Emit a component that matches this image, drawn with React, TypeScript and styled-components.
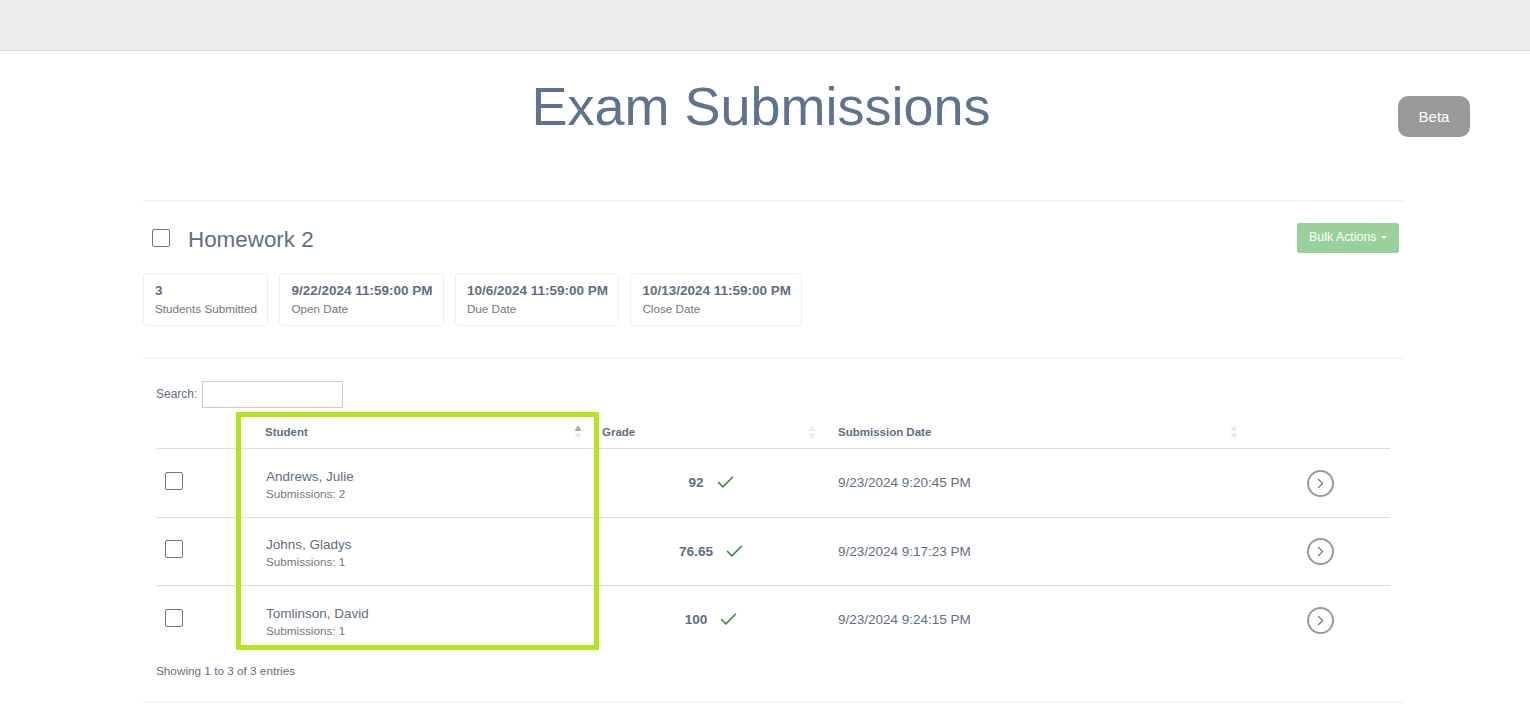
import { ChevronRight, Check } from "lucide-react";
import styled, { createGlobalStyle } from "styled-components";

const stats = [
  { value: "3", label: "Students Submitted" },
  { value: "9/22/2024 11:59:00 PM", label: "Open Date" },
  { value: "10/6/2024 11:59:00 PM", label: "Due Date" },
  { value: "10/13/2024 11:59:00 PM", label: "Close Date" },
];

const students = [
  { name: "Andrews, Julie", count: 2, grade: "92", date: "9/23/2024 9:20:45 PM" },
  { name: "Johns, Gladys", count: 1, grade: "76.65", date: "9/23/2024 9:17:23 PM" },
  { name: "Tomlinson, David", count: 1, grade: "100", date: "9/23/2024 9:24:15 PM" },
];

function SortIcon({ active }: { active?: boolean }) {
  return (
    <SortSvg width="8" height="16" viewBox="0 0 8 16">
      <path d="M4 1 L7.5 7 H0.5 Z" fill={active ? "#a3adb9" : "#e6e9ed"} />
      <path d="M4 15 L7.5 9.500 H0.5 Z" fill="#e6e9ed" />
    </SortSvg>
  );
}

export default function App() {
  return (
    <>
      <GlobalStyle />
      <TopBar />
      <Title>Exam Submissions</Title>
      <BetaButton>Beta</BetaButton>
      <Container>
        <Divider />
        <AssignmentHeader>
          <AssignmentName>
            <Box />
            <h2>Homework 2</h2>
          </AssignmentName>
          <BulkButton>
            Bulk Actions <Caret />
          </BulkButton>
        </AssignmentHeader>
        <Stats>
          {stats.map((s) => (
            <StatCard key={s.label}>
              <strong>{s.value}</strong>
              <span>{s.label}</span>
            </StatCard>
          ))}
        </Stats>
        <Divider />
        <TableArea>
          <SearchRow>
            <span>Search:</span>
            <SearchInput />
          </SearchRow>
          <TableWrap>
            <HeadRow>
              <span />
              <HeadCell $first>
                Student <SortIcon active />
              </HeadCell>
              <HeadCell>
                Grade <SortIcon />
              </HeadCell>
              <HeadCell $wide>
                Submission Date <SortIcon />
              </HeadCell>
              <span />
            </HeadRow>
            {students.map((s) => (
              <Row key={s.name}>
                <Box />
                <StudentCell>
                  <Name>{s.name}</Name>
                  <Count>Submissions: {s.count}</Count>
                </StudentCell>
                <GradeCell>
                  <strong>{s.grade}</strong>
                  <Check size={21} color="#3f8a4a" strokeWidth={1.9} />
                </GradeCell>
                <DateCell>{s.date}</DateCell>
                <ArrowCell>
                  <Arrow>
                    <ChevronRight size={17} strokeWidth={1.5} />
                  </Arrow>
                </ArrowCell>
              </Row>
            ))}
            <Highlight />
          </TableWrap>
          <Entries>Showing 1 to 3 of 3 entries</Entries>
        </TableArea>
        <Divider />
      </Container>
    </>
  );
}

const GlobalStyle = createGlobalStyle`
  html, body {
    margin: 0;
    padding: 0;
    background: #fff;
    overflow: hidden;
    font-family: "Liberation Sans", Arial, sans-serif;
    color: #5f6f82;
  }
  * { box-sizing: border-box; }
`;

const TopBar = styled.div`
  height: 51px;
  background: #ececec;
  border-bottom: 1px solid #dcdcdc;
`;

const Title = styled.h1`
  margin: 0;
  height: 149px;
  padding-top: 21px;
  padding-right: 8px;
  text-align: center;
  font-size: 54px;
  line-height: 68px;
  font-weight: 400;
  color: #5f7390;
`;

const BetaButton = styled.button`
  position: absolute;
  top: 96px;
  left: 1398px;
  width: 72px;
  height: 41px;
  border: none;
  border-radius: 10px;
  background: #999;
  color: #fff;
  font: 400 15px "Liberation Sans", Arial, sans-serif;
`;

const Container = styled.main`
  width: 1260px;
  margin-left: 143px;
`;

const Divider = styled.hr`
  margin: 0;
  height: 1px;
  border: none;
  background: #eee;
`;

const AssignmentHeader = styled.div`
  display: flex;
  justify-content: space-between;
  align-items: flex-start;
  padding: 22px 4px 0 9px;
  height: 72px;
`;

const AssignmentName = styled.div`
  display: flex;
  align-items: center;
  gap: 18px;
  height: 30px;

  h2 {
    margin: 4px 0 0;
    font-size: 22.4px;
    font-weight: 400;
    color: #5f6f82;
  }
`;

const Box = styled.span`
  display: block;
  width: 18px;
  height: 18px;
  border: 1px solid #767676;
  border-radius: 2px;
  background: #fff;
`;

const BulkButton = styled.button`
  width: 102px;
  height: 30px;
  padding: 0 0 2px;
  border: 1px solid #98d098;
  border-radius: 2px;
  background: #9ad09a;
  color: #fff;
  font: 400 12.4px "Liberation Sans", Arial, sans-serif;
`;

const Caret = styled.span`
  display: inline-block;
  margin-left: 1px;
  vertical-align: middle;
  border-top: 3px solid #fff;
  border-left: 3px solid transparent;
  border-right: 3px solid transparent;
`;

const Stats = styled.div`
  display: flex;
  gap: 11px;
  height: 85px;
`;

const StatCard = styled.div`
  display: flex;
  flex-direction: column;
  gap: 2px;
  height: 53px;
  padding: 9px 10.4px 0 11px;
  border: 1px solid #eee;
  border-radius: 4px;

  strong {
    font-size: 13.5px;
    line-height: 16px;
    color: #5f6f82;
  }

  span {
    font-size: 11.7px;
    line-height: 15px;
    color: #777;
  }
`;

const TableArea = styled.section`
  padding: 22px 13px 0;
  height: 343px;
`;

const SearchRow = styled.label`
  display: flex;
  align-items: center;
  gap: 5px;
  height: 27px;
  font-size: 12px;

  span {
    margin-bottom: 2px;
  }
`;

const SearchInput = styled.input`
  width: 141px;
  height: 27px;
  border: 1px solid #ccc;
  background: #fff;
  outline: none;
`;

const TableWrap = styled.div`
  position: relative;
  margin-top: 8px;
`;

const columns = "96px 338px 235px 425px 140px";

const HeadRow = styled.div`
  display: grid;
  grid-template-columns: ${columns};
  height: 33px;
  border-bottom: 1px solid #ddd;
`;

const HeadCell = styled.div<{ $first?: boolean; $wide?: boolean }>`
  display: flex;
  justify-content: space-between;
  align-items: center;
  padding: 0 ${(p) => (p.$wide ? "12px" : p.$first ? "8px" : "9px")} 0 ${(p) => (p.$first ? "13px" : p.$wide ? "13px" : "12px")};
  font-size: 11.5px;
  font-weight: 700;
  color: #5f6f82;
`;

const SortSvg = styled.svg`
  display: block;
`;

const Row = styled.div`
  display: grid;
  grid-template-columns: ${columns};
  align-items: center;
  height: 68px;
  border-bottom: 1px solid #ddd;

  ${HeadRow} + & {
    height: 69px;
  }

  &:nth-last-of-type(2) {
    border-bottom: none;
  }

  & > ${Box} {
    margin: 0 0 5px 9px;
  }
`;

const StudentCell = styled.div`
  display: flex;
  flex-direction: column;
  gap: 2px;
  padding: 3px 0 0 14px;
`;

const Name = styled.span`
  font-size: 13.5px;
  line-height: 16px;
`;

const Count = styled.span`
  font-size: 11.7px;
  line-height: 14px;
  color: #777;
`;

const GradeCell = styled.div`
  display: flex;
  justify-content: center;
  align-items: center;
  gap: 11px;
  padding: 0 0 1px 9px;

  strong {
    font-size: 13.6px;
  }
`;

const DateCell = styled.div`
  padding-left: 13px;
  margin-bottom: 1px;
  font-size: 13.5px;
`;

const ArrowCell = styled.div`
  display: flex;
  justify-content: center;
`;

const Arrow = styled.span`
  display: flex;
  align-items: center;
  justify-content: center;
  width: 27px;
  height: 27px;
  border: 2px solid #999;
  border-radius: 50%;
  color: #777;
`;

const Highlight = styled.div`
  position: absolute;
  left: 80px;
  top: -4px;
  width: 363px;
  height: 238px;
  border: 5px solid #b5e61d;
  pointer-events: none;
`;

const Entries = styled.div`
  margin-top: 10px;
  font-size: 11.75px;
`;
